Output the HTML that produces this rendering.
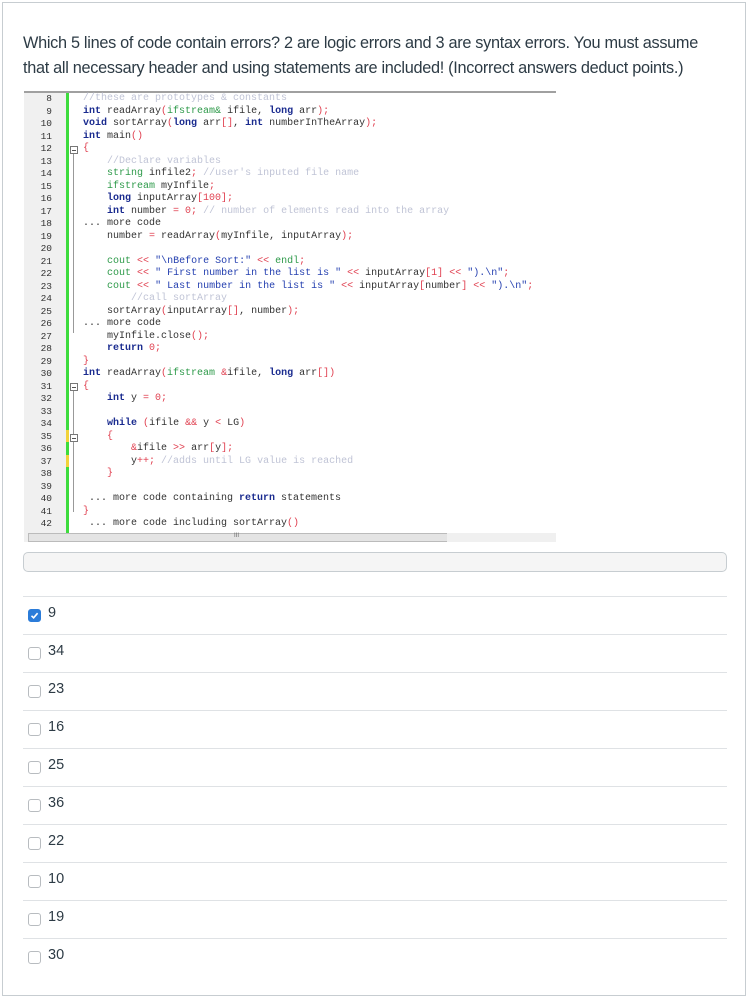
<!DOCTYPE html>
<html><head><meta charset="utf-8"><style>
body{margin:0;width:754px;height:1002px;background:#fff;position:relative;overflow:hidden;font-family:"Liberation Sans",sans-serif;color:#2d3b45}
.frame{position:absolute;left:2px;top:2px;width:744px;height:994px;border:1px solid #c7cdd1;box-sizing:border-box}
.q{position:absolute;left:23px;top:31px;font-size:16.3px;line-height:25px;width:690px;letter-spacing:-0.3px;color:#2d3b45}
.code{position:absolute;left:24px;top:91px;width:532px;height:449px;background:#fff;overflow:hidden;border-top:2px solid #a0a0a0}
.gut{position:absolute;left:0;top:0;width:42px;height:100%;background:#f0f0f0}
.bar{position:absolute;left:42px;top:0;width:3px;height:100%;background:#3ddc3d}
.ln{position:absolute;left:0;width:28px;text-align:right;font:9.5px/12px "Liberation Mono",monospace;color:#333}
.cl{position:absolute;left:59px;font:10px/12px "Liberation Mono",monospace;color:#333;white-space:pre}
.k{color:#1a2b8f;font-weight:bold}.g{color:#2e9a4a}.c{color:#c0c4d6}.r{color:#e04050}.s{color:#2540b0}
.fold{position:absolute;left:46px;width:8px;height:8px;border:1px solid #777;background:#fff;box-sizing:border-box}
.fold:after{content:"";position:absolute;left:1px;top:3px;width:4px;height:1px;background:#555}
.vl{position:absolute;left:49px;width:1px;background:#999}
.sb{position:absolute;left:4px;top:440px;width:419px;height:7px;background:#e4e4e4;border:1px solid #bbb}
.sbt{position:absolute;left:423px;top:440px;width:109px;height:9px;background:#f0f0f0}
.ta{position:absolute;left:23px;top:552px;width:704px;height:20px;border:1px solid #c7cdd1;border-radius:5px;background:#f5f5f5;box-sizing:border-box}
.opt{position:absolute;left:23px;width:704px;height:38px;border-top:1px solid #dfe2e5}
.cb{position:absolute;left:5px;top:12px;width:11px;height:11px;border:1px solid #b8bcc0;border-radius:3px;background:#fff}
.cb.on{background:#2b7cd9;border-color:#2b7cd9}
.opt span{position:absolute;left:25px;top:8px;font-size:14.5px;color:#2d3b45}
</style></head><body>
<div class="frame"></div>
<div class="q">Which 5 lines of code contain errors? 2 are logic errors and 3 are syntax errors. You must assume that all necessary header and using statements are included! (Incorrect answers deduct points.)</div>
<div class="code">
<div class="gut"></div><div class="bar"></div>
<div style="position:absolute;left:42px;top:337px;width:3px;height:12px;background:#f1d33a"></div>
<div style="position:absolute;left:42px;top:362px;width:3px;height:12px;background:#f1d33a"></div>
<div class="vl" style="top:60px;height:180px"></div>
<div class="vl" style="top:297px;height:122px"></div>
<div class="fold" style="top:53px"></div>
<div class="fold" style="top:290px"></div>
<div class="fold" style="top:341px"></div>
<div class="sb"></div><div class="sbt"></div>
<div style="position:absolute;left:210px;top:440px;font:6px sans-serif;color:#666">III</div>
</div>
<div class="ta"></div>
<div class="opt" style="top:596px"><div class="cb on"><svg width="11" height="11" viewBox="0 0 11 11" style="position:absolute;left:0;top:0"><path d="M2.5 5.8 L4.6 7.8 L8.6 3.2" stroke="#fff" stroke-width="1.6" fill="none"/></svg></div><span>9</span></div>
<div class="opt" style="top:634px"><div class="cb"></div><span>34</span></div>
<div class="opt" style="top:672px"><div class="cb"></div><span>23</span></div>
<div class="opt" style="top:710px"><div class="cb"></div><span>16</span></div>
<div class="opt" style="top:748px"><div class="cb"></div><span>25</span></div>
<div class="opt" style="top:786px"><div class="cb"></div><span>36</span></div>
<div class="opt" style="top:824px"><div class="cb"></div><span>22</span></div>
<div class="opt" style="top:862px"><div class="cb"></div><span>10</span></div>
<div class="opt" style="top:900px"><div class="cb"></div><span>19</span></div>
<div class="opt" style="top:938px"><div class="cb"></div><span>30</span></div>

<div style="position:absolute;left:24px;top:88px">
<div class="ln" style="top:5px">8</div><div class="cl" style="top:5px"><span class="c">//these are prototypes &amp; constants</span></div>
<div class="ln" style="top:17.5px">9</div><div class="cl" style="top:17.5px"><span class="k">int</span> readArray<span class="r">(</span><span class="g">ifstream&amp;</span> ifile, <span class="k">long</span> arr<span class="r">);</span></div>
<div class="ln" style="top:30px">10</div><div class="cl" style="top:30px"><span class="k">void</span> sortArray<span class="r">(</span><span class="k">long</span> arr<span class="r">[]</span>, <span class="k">int</span> numberInTheArray<span class="r">);</span></div>
<div class="ln" style="top:42.5px">11</div><div class="cl" style="top:42.5px"><span class="k">int</span> main<span class="r">()</span></div>
<div class="ln" style="top:55px">12</div><div class="cl" style="top:55px"><span class="r">{</span></div>
<div class="ln" style="top:67.5px">13</div><div class="cl" style="top:67.5px">    <span class="c">//Declare variables</span></div>
<div class="ln" style="top:80px">14</div><div class="cl" style="top:80px">    <span class="g">string</span> infile2<span class="r">;</span> <span class="c">//user's inputed file name</span></div>
<div class="ln" style="top:92.5px">15</div><div class="cl" style="top:92.5px">    <span class="g">ifstream</span> myInfile<span class="r">;</span></div>
<div class="ln" style="top:105px">16</div><div class="cl" style="top:105px">    <span class="k">long</span> inputArray<span class="r">[100];</span></div>
<div class="ln" style="top:117.5px">17</div><div class="cl" style="top:117.5px">    <span class="k">int</span> number <span class="r">= 0;</span> <span class="c">// number of elements read into the array</span></div>
<div class="ln" style="top:130px">18</div><div class="cl" style="top:130px">... more code</div>
<div class="ln" style="top:142.5px">19</div><div class="cl" style="top:142.5px">    number <span class="r">=</span> readArray<span class="r">(</span>myInfile, inputArray<span class="r">);</span></div>
<div class="ln" style="top:155px">20</div>
<div class="ln" style="top:167.5px">21</div><div class="cl" style="top:167.5px">    <span class="g">cout</span> <span class="r">&lt;&lt;</span> <span class="s">"\nBefore Sort:"</span> <span class="r">&lt;&lt;</span> <span class="g">endl</span><span class="r">;</span></div>
<div class="ln" style="top:180px">22</div><div class="cl" style="top:180px">    <span class="g">cout</span> <span class="r">&lt;&lt;</span> <span class="s">" First number in the list is "</span> <span class="r">&lt;&lt;</span> inputArray<span class="r">[1]</span> <span class="r">&lt;&lt;</span> <span class="s">").\n"</span><span class="r">;</span></div>
<div class="ln" style="top:192.5px">23</div><div class="cl" style="top:192.5px">    <span class="g">cout</span> <span class="r">&lt;&lt;</span> <span class="s">" Last number in the list is "</span> <span class="r">&lt;&lt;</span> inputArray<span class="r">[</span>number<span class="r">]</span> <span class="r">&lt;&lt;</span> <span class="s">").\n"</span><span class="r">;</span></div>
<div class="ln" style="top:205px">24</div><div class="cl" style="top:205px">        <span class="c">//call sortArray</span></div>
<div class="ln" style="top:217.5px">25</div><div class="cl" style="top:217.5px">    sortArray<span class="r">(</span>inputArray<span class="r">[]</span>, number<span class="r">);</span></div>
<div class="ln" style="top:230px">26</div><div class="cl" style="top:230px">... more code</div>
<div class="ln" style="top:242.5px">27</div><div class="cl" style="top:242.5px">    myInfile.close<span class="r">();</span></div>
<div class="ln" style="top:255px">28</div><div class="cl" style="top:255px">    <span class="k">return</span> <span class="r">0;</span></div>
<div class="ln" style="top:267.5px">29</div><div class="cl" style="top:267.5px"><span class="r">}</span></div>
<div class="ln" style="top:280px">30</div><div class="cl" style="top:280px"><span class="k">int</span> readArray<span class="r">(</span><span class="g">ifstream</span> <span class="r">&amp;</span>ifile, <span class="k">long</span> arr<span class="r">[])</span></div>
<div class="ln" style="top:292.5px">31</div><div class="cl" style="top:292.5px"><span class="r">{</span></div>
<div class="ln" style="top:305px">32</div><div class="cl" style="top:305px">    <span class="k">int</span> y <span class="r">= 0;</span></div>
<div class="ln" style="top:317.5px">33</div>
<div class="ln" style="top:330px">34</div><div class="cl" style="top:330px">    <span class="k">while</span> <span class="r">(</span>ifile <span class="r">&amp;&amp;</span> y <span class="r">&lt;</span> LG<span class="r">)</span></div>
<div class="ln" style="top:342.5px">35</div><div class="cl" style="top:342.5px">    <span class="r">{</span></div>
<div class="ln" style="top:355px">36</div><div class="cl" style="top:355px">        <span class="r">&amp;</span>ifile <span class="r">&gt;&gt;</span> arr<span class="r">[</span>y<span class="r">];</span></div>
<div class="ln" style="top:367.5px">37</div><div class="cl" style="top:367.5px">        y<span class="r">++;</span> <span class="c">//adds until LG value is reached</span></div>
<div class="ln" style="top:380px">38</div><div class="cl" style="top:380px">    <span class="r">}</span></div>
<div class="ln" style="top:392.5px">39</div>
<div class="ln" style="top:405px">40</div><div class="cl" style="top:405px"> ... more code containing <span class="k">return</span> statements</div>
<div class="ln" style="top:417.5px">41</div><div class="cl" style="top:417.5px"><span class="r">}</span></div>
<div class="ln" style="top:430px">42</div><div class="cl" style="top:430px"> ... more code including sortArray<span class="r">()</span></div>
</div>
</body></html>
